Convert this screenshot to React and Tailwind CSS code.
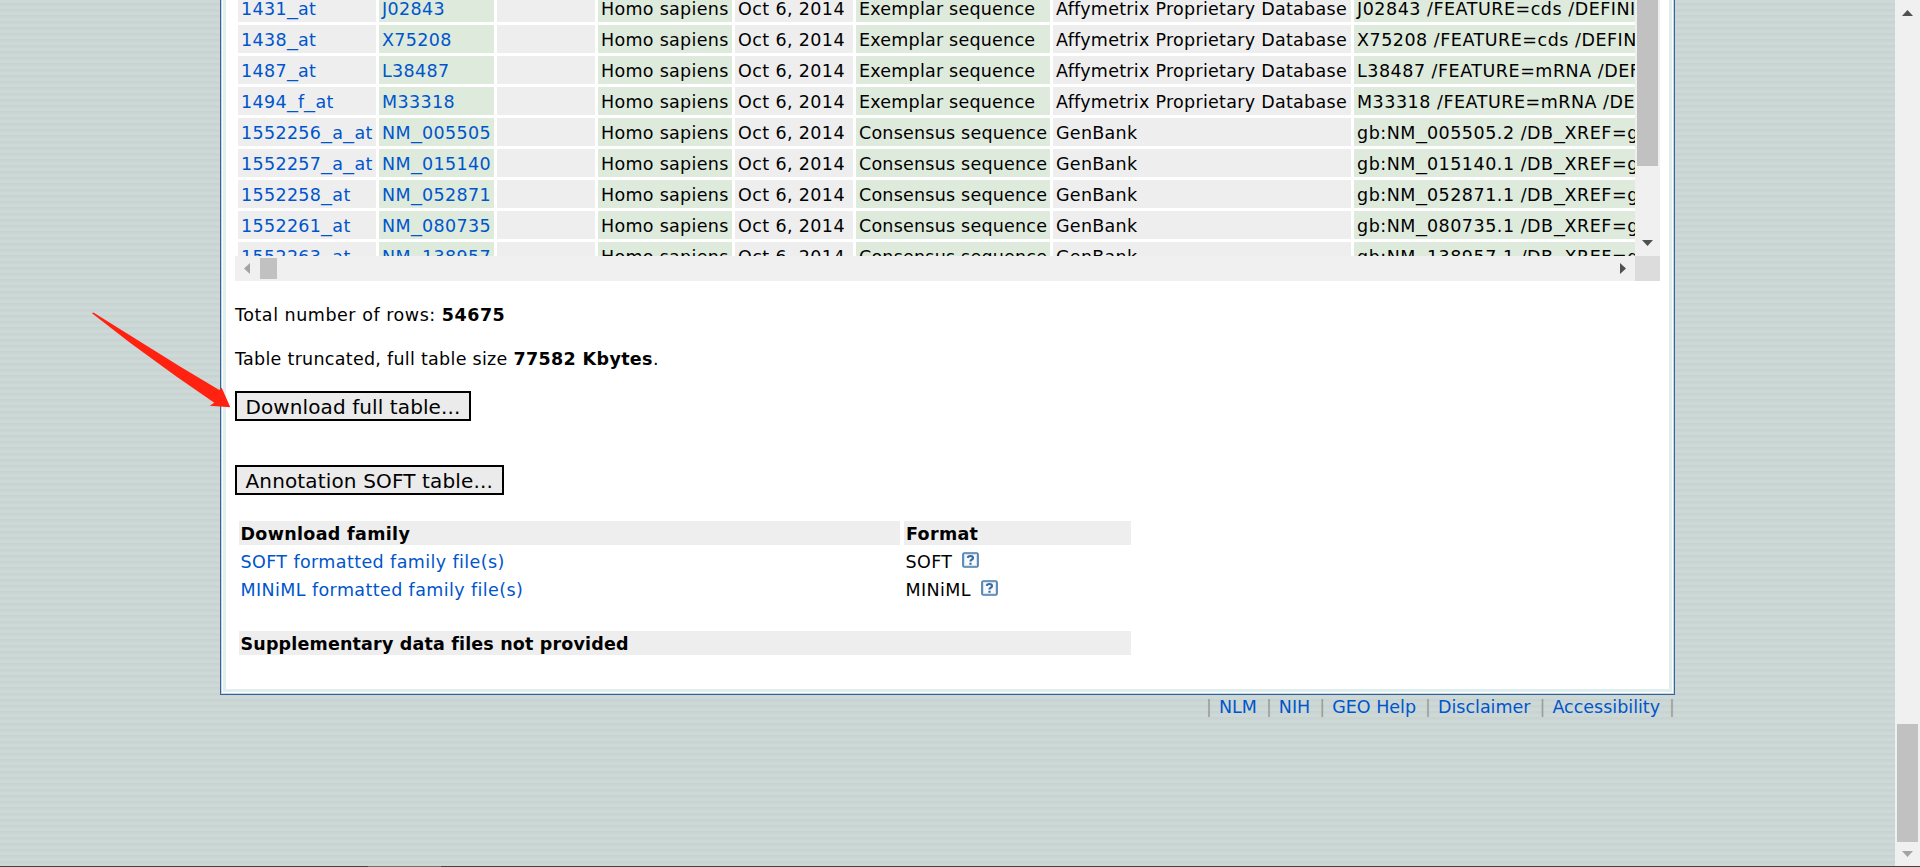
import { Fragment } from 'react';

const rows = [
  { id: '1431_at', acc: 'J02843', type: 'Exemplar sequence', source: 'Affymetrix Proprietary Database', desc: 'J02843 /FEATURE=cds /DEFINITION=HUMCYPIIE' },
  { id: '1438_at', acc: 'X75208', type: 'Exemplar sequence', source: 'Affymetrix Proprietary Database', desc: 'X75208 /FEATURE=cds /DEFINITION=HSPTKR' },
  { id: '1487_at', acc: 'L38487', type: 'Exemplar sequence', source: 'Affymetrix Proprietary Database', desc: 'L38487 /FEATURE=mRNA /DEFINITION=HUMHERRA' },
  { id: '1494_f_at', acc: 'M33318', type: 'Exemplar sequence', source: 'Affymetrix Proprietary Database', desc: 'M33318 /FEATURE=mRNA /DEFINITION=HUMCPIIA3A' },
  { id: '1552256_a_at', acc: 'NM_005505', type: 'Consensus sequence', source: 'GenBank', desc: 'gb:NM_005505.2 /DB_XREF=gi:21361199' },
  { id: '1552257_a_at', acc: 'NM_015140', type: 'Consensus sequence', source: 'GenBank', desc: 'gb:NM_015140.1 /DB_XREF=gi:24308058' },
  { id: '1552258_at', acc: 'NM_052871', type: 'Consensus sequence', source: 'GenBank', desc: 'gb:NM_052871.1 /DB_XREF=gi:16418460' },
  { id: '1552261_at', acc: 'NM_080735', type: 'Consensus sequence', source: 'GenBank', desc: 'gb:NM_080735.1 /DB_XREF=gi:18201877' },
  { id: '1552263_at', acc: 'NM_138957', type: 'Consensus sequence', source: 'GenBank', desc: 'gb:NM_138957.1 /DB_XREF=gi:20986530' },
];

const footerLinks = ['NLM', 'NIH', 'GEO Help', 'Disclaimer', 'Accessibility'];

// Verdana draws "_" as wide as a digit, so it gets a little extra room
function Code({ text }) {
  return text.split('_').map((part, i) => (
    <Fragment key={i}>
      {i > 0 && <span className="inline-block w-[11px] origin-left scale-x-125">_</span>}
      {part}
    </Fragment>
  ));
}

function Row({ row }) {
  const gray = 'h-7 shrink-0 bg-[#eeeeee] pt-px pl-[3px] leading-7 ';
  const green = 'h-7 shrink-0 bg-[#deeadc] pt-px pl-[3px] leading-7 ';
  return (
    <div className="flex shrink-0 gap-[3px] whitespace-nowrap">
      <div className={gray + 'w-[138px] tracking-[0.34px] text-[#0055cc]'}><Code text={row.id} /></div>
      <div className={green + 'w-[115px] tracking-[0.36px] text-[#0055cc]'}><Code text={row.acc} /></div>
      <div className={gray + 'w-[98px]'}></div>
      <div className={green + 'w-[134px] tracking-[0.3px]'}>Homo sapiens</div>
      <div className={gray + 'w-[118px] tracking-[0.39px]'}>Oct 6, 2014</div>
      <div className={green + 'w-[194px] tracking-[0.22px]'}>{row.type}</div>
      <div className={gray + 'w-[298px] tracking-[0.28px]'}>{row.source}</div>
      <div className={green + 'w-[500px] tracking-[0.52px]'}><Code text={row.desc} /></div>
    </div>
  );
}

function HelpIcon() {
  return (
    <svg width="17" height="16" viewBox="0 0 17 16" className="-mt-[4px] ml-[10px]">
      <rect x="1" y="1" width="15" height="14" rx="1.5" fill="#d3e2ec" stroke="#4a7cab" strokeWidth="1.7" />
      <rect x="3" y="3" width="11" height="10" fill="#f6fafc" />
      <path d="M5.8 5.9Q6 4 8.4 4Q11 4 11 6Q11 7.3 9.3 8Q8.5 8.4 8.5 9.6M8.5 10.8v1.9" fill="none" stroke="#3a6a9c" strokeWidth="2.2" />
    </svg>
  );
}

function DataTable() {
  return (
    <div className="w-[1425px]">
      <div className="flex h-64">
        <div className="flex w-[1400px] flex-col overflow-hidden pl-[3px]">
          <div className="-mt-[6px] flex flex-col gap-[3px]">
            {rows.map((row) => <Row key={row.id} row={row} />)}
          </div>
        </div>
        <div className="flex w-[25px] flex-col items-center justify-between bg-[#f0f0f0] pb-[10px]">
          <div className="h-[166px] w-[21px] bg-[#c1c1c1]"></div>
          <svg width="11" height="6" viewBox="0 0 11 6"><path d="M0 0h11L5.5 6z" fill="#505050" /></svg>
        </div>
      </div>
      <div className="flex h-[25px]">
        <div className="flex w-[1400px] items-center bg-[#f0f0f0] pr-[9px] pl-[9px]">
          <svg width="6" height="11" viewBox="0 0 6 11"><path d="M6 0v11L0 5.5z" fill="#a3a3a3" /></svg>
          <div className="ml-[10px] h-[21px] w-[17px] bg-[#c1c1c1]"></div>
          <svg width="6" height="11" viewBox="0 0 6 11" className="ml-auto"><path d="M0 0v11L6 5.5z" fill="#505050" /></svg>
        </div>
        <div className="w-[25px] bg-[#dcdcdc]"></div>
      </div>
    </div>
  );
}

function FamilyTable() {
  return (
    <div className="mt-[26px] ml-1 w-[892px]">
      <div className="flex h-6 gap-1 leading-[26px] font-bold tracking-[0.33px]">
        <div className="w-[661px] bg-[#eeeeee] pl-[1.5px]">Download family</div>
        <div className="flex-1 bg-[#eeeeee] pl-[2px]">Format</div>
      </div>
      <div className="mt-1 flex h-6 gap-1 leading-[26px] tracking-[0.4px]">
        <div className="w-[661px] pl-[1.5px] text-[#0055cc]">SOFT formatted family file(s)</div>
        <div className="flex items-center pt-[2px] pl-[1.5px]">SOFT<HelpIcon /></div>
      </div>
      <div className="mt-1 flex h-6 gap-1 leading-[26px] tracking-[0.4px]">
        <div className="w-[661px] pl-[1.5px] text-[#0055cc]">MINiML formatted family file(s)</div>
        <div className="flex items-center pt-[2px] pl-[1.5px]">MINiML<HelpIcon /></div>
      </div>
      <div className="mt-[30px] h-6 bg-[#eeeeee] pl-[1.5px] leading-[26px] font-bold tracking-[0.17px]">Supplementary data files not provided</div>
    </div>
  );
}

export default function App() {
  const button = 'block h-[30px] border-2 border-black bg-[#ebebeb] pl-[8.5px] text-left text-[20px] leading-7 whitespace-nowrap ';
  return (
    <div className="relative flex h-[867px] w-[1920px] flex-col overflow-hidden font-['DejaVu_Sans',sans-serif] text-[17.5px] text-black">
      <div className="flex h-[866px]">
        <div className="w-[1895px] bg-[#ccd8d5] bg-[repeating-linear-gradient(180deg,#cdd9d6_0px,#cdd9d6_3px,#c9d4d2_3px,#c9d4d2_5px,#cbd6d4_5px,#cbd6d4_6px)] pl-[220px]">
          <div className="h-[695px] w-[1455px] border-x border-b border-[#336699] bg-white">
            <div className="h-full border-x border-b border-[#c5d3e2] pr-px pb-px pl-px">
              <div className="h-full border-x-[3px] border-b-[3px] border-[#e0eeee] pl-[9px]">
                <DataTable />
                <p className="mt-[22px] leading-6 tracking-[0.53px]">Total number of rows: <b>54675</b></p>
                <p className="mt-5 leading-6 tracking-[0.28px]">Table truncated, full table size <b className="tracking-[0.36px]">77582 Kbytes</b>.</p>
                <button className={button + 'mt-5 w-[236px] tracking-[0.1px]'}>Download full table...</button>
                <button className={button + 'mt-11 w-[269px] tracking-[0.15px]'}>Annotation SOFT table...</button>
                <FamilyTable />
              </div>
            </div>
          </div>
          <div className="flex w-[1455px] justify-end leading-6 text-[#999999]">
            <span>|</span>
            {footerLinks.map((link) => (
              <span key={link} className="ml-[7px]"><a className="mr-[9px] text-[#0055cc]">{link}</a>|</span>
            ))}
          </div>
        </div>

        {/* page scrollbar */}
        <div className="flex w-[25px] flex-col items-center bg-[#f0f0f0] pt-[10px]">
          <svg width="11" height="6" viewBox="0 0 11 6"><path d="M0 6h11L5.5 0z" fill="#505050" /></svg>
          <div className="mt-[708px] h-[118px] w-[21px] bg-[#c1c1c1]"></div>
          <svg width="11" height="6" viewBox="0 0 11 6" className="mt-[9px]"><path d="M0 0h11L5.5 6z" fill="#a3a3a3" /></svg>
        </div>
      </div>
      <div className="h-px bg-[#40443a] pl-[368px]"><div className="h-px w-[73px] bg-[#707468]"></div></div>

      {/* arrow pointing at the download button */}
      <svg width="142" height="98" viewBox="0 0 142 98" className="absolute top-[311px] left-[91px]">
        <path d="M1 2.2L2.4 1.4L89 55.5L128.3 79L130.7 76.7L139.3 96.3L118.7 94.7L123.3 91.7L85.7 65.7L39 31.7Z" fill="#ff2211" />
      </svg>
    </div>
  );
}
